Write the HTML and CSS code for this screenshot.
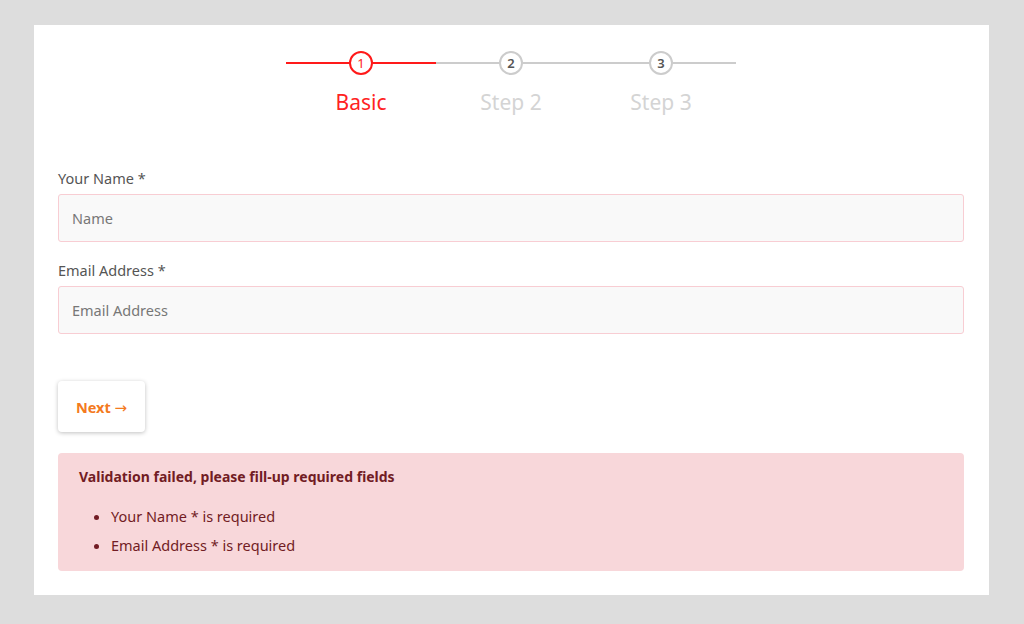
FILE: index.html
```html
<!DOCTYPE html>
<html>
<head>
<meta charset="utf-8">
<link rel="stylesheet" href="styles.css">
</head>
<body>
<div class="card">
  <div class="stepper">
    <div class="step active">
      <div class="track"><span class="circle">1</span></div>
      <div class="label">Basic</div>
    </div>
    <div class="step">
      <div class="track"><span class="circle">2</span></div>
      <div class="label">Step 2</div>
    </div>
    <div class="step">
      <div class="track"><span class="circle">3</span></div>
      <div class="label">Step 3</div>
    </div>
  </div>
  <form class="form">
    <div class="field">
      <label class="field-label">Your Name *</label>
      <input class="input" type="text" placeholder="Name">
    </div>
    <div class="field">
      <label class="field-label">Email Address *</label>
      <input class="input" type="text" placeholder="Email Address">
    </div>
    <button type="button" class="btn">Next <span class="arrow">→</span></button>
    <div class="alert">
      <div class="alert-title">Validation failed, please fill-up required fields</div>
      <ul class="alert-list">
        <li>Your Name * is required</li>
        <li>Email Address * is required</li>
      </ul>
    </div>
  </form>
</div>
</body>
</html>
```
FILE: styles.css
```css
html, body {
  margin: 0;
  background: #dddddd;
}
body {
  padding: 25px 35px 29px 34px;
  font-family: "Noto Sans", "Open Sans", sans-serif;
}
.card {
  background: #ffffff;
  width: 955px;
  height: 570px;
  box-sizing: border-box;
  padding: 26px 25px 24px 24px;
}
.stepper {
  display: flex;
  justify-content: center;
}
.step {
  width: 150px;
  display: flex;
  flex-direction: column;
  align-items: center;
}
.track {
  width: 100%;
  height: 24px;
  display: flex;
  justify-content: center;
  align-items: center;
  background: linear-gradient(#cccccc, #cccccc) center / 100% 2px no-repeat;
}
.step.active .track {
  background: linear-gradient(#ff1a1a, #ff1a1a) center / 100% 2px no-repeat;
}
.circle {
  width: 20px;
  height: 20px;
  border: 2px solid #cccccc;
  border-radius: 50%;
  background: #fff;
  color: #555;
  font-size: 13px;
  font-weight: 600;
  display: flex;
  align-items: center;
  justify-content: center;
  line-height: 1;
}
.step.active .circle {
  border-color: #ff1a1a;
  color: #ff1a1a;
  font-weight: 400;
}
.label {
  margin-top: 12px;
  font-size: 21px;
  line-height: 30px;
  color: #d4d4d4;
}
.step.active .label {
  color: #ff2222;
}
.form {
  margin-top: 51px;
}
.field {
  margin-bottom: 18px;
}
.field-label {
  display: block;
  font-size: 14.5px;
  line-height: 20px;
  color: #555555;
  margin-bottom: 6px;
}
.input {
  display: block;
  width: 100%;
  box-sizing: border-box;
  height: 48px;
  border: 1px solid #f8cdd3;
  border-radius: 3px;
  background: #f9f9f9;
  padding: 0 13px;
  font-family: inherit;
  font-size: 14.5px;
  color: #555;
  outline: none;
}
.input::placeholder {
  color: #777777;
}
.btn {
  display: block;
  margin-top: 47px;
  height: 51px;
  width: 87px;
  border: none;
  border-radius: 4px;
  background: #ffffff;
  box-shadow: 0 1px 4px rgba(0, 0, 0, 0.25);
  color: #f47a20;
  font-family: inherit;
  font-size: 14.5px;
  font-weight: 700;
  padding: 0;
  cursor: pointer;
}
.arrow {
  font-family: "DejaVu Sans", sans-serif;
  font-weight: 400;
  font-size: 15px;
}
.alert {
  margin-top: 21px;
  background: #f8d7da;
  border-radius: 4px;
  color: #721c24;
  padding: 14px 21px 14px 21px;
  height: 118px;
  box-sizing: border-box;
}
.alert-title {
  font-size: 14px;
  font-weight: 700;
  line-height: 20px;
}
.alert-list {
  margin: 15px 0 0 0;
  padding-left: 32px;
  font-size: 14.5px;
  line-height: 29px;
}
```
